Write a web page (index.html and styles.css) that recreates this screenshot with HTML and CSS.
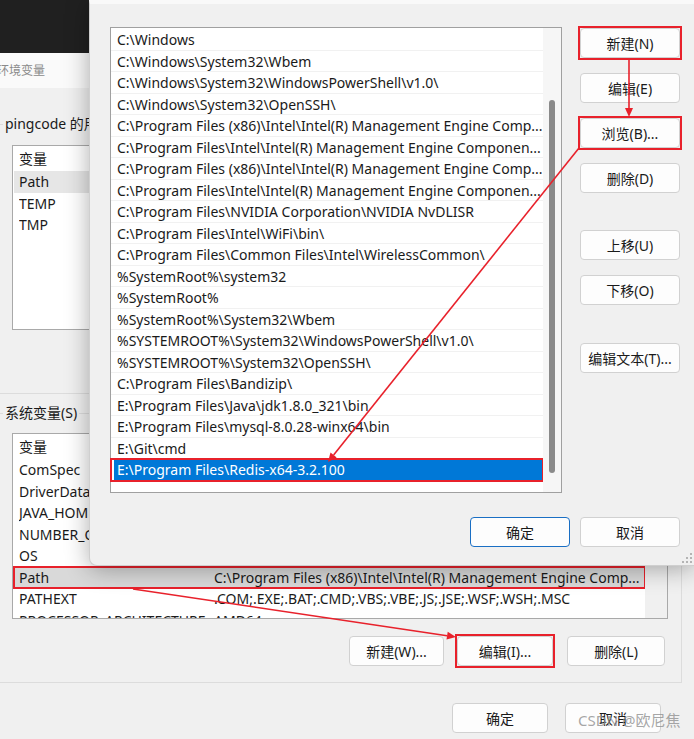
FILE: index.html
```html
<!DOCTYPE html>
<html lang="zh-CN">
<head>
<meta charset="utf-8">
<title>环境变量</title>
<link rel="stylesheet" href="styles.css">
</head>
<body>
<div class="screen">
  <div class="backwin">
    <div class="titlebar">环境变量</div>
    <div class="bw-content">
      <fieldset class="group group-user">
        <legend>pingcode 的用户变量(U)</legend>
        <div class="listview lv-user">
          <div class="lv-body">
            <div class="lv-head"><span class="c1">变量</span><span>值</span></div>
            <div class="lv-row sel-light"><span class="c1">Path</span><span>C:\Users\pingcode\AppData\Local\Microsoft\WindowsApps</span></div>
            <div class="lv-row"><span class="c1">TEMP</span><span>%USERPROFILE%\AppData\Local\Temp</span></div>
            <div class="lv-row"><span class="c1">TMP</span><span>%USERPROFILE%\AppData\Local\Temp</span></div>
          </div>
        </div>
      </fieldset>
      <fieldset class="group group-sys">
        <legend>系统变量(S)</legend>
        <div class="listview lv-sys">
          <div class="lv-body">
            <div class="lv-head"><span class="c1">变量</span><span>值</span></div>
            <div class="lv-row"><span class="c1">ComSpec</span><span>C:\Windows\system32\cmd.exe</span></div>
            <div class="lv-row"><span class="c1">DriverData</span><span>C:\Windows\System32\Drivers\DriverData</span></div>
            <div class="lv-row"><span class="c1">JAVA_HOME</span><span>E:\Program Files\Java\jdk1.8.0_321</span></div>
            <div class="lv-row"><span class="c1">NUMBER_OF_PROCESSORS</span><span>8</span></div>
            <div class="lv-row"><span class="c1">OS</span><span>Windows_NT</span></div>
            <div class="lv-row sel-gray mark-row"><span class="c1">Path</span><span>C:\Program Files (x86)\Intel\Intel(R) Management Engine Comp...</span></div>
            <div class="lv-row"><span class="c1">PATHEXT</span><span>.COM;.EXE;.BAT;.CMD;.VBS;.VBE;.JS;.JSE;.WSF;.WSH;.MSC</span></div>
            <div class="lv-row"><span class="c1">PROCESSOR_ARCHITECTURE</span><span>AMD64</span></div>
          </div>
          <div class="lv-scroll"></div>
        </div>
        <div class="sysbtns">
          <button class="btn b-new">新建(W)...</button>
          <button class="btn b-edit mark">编辑(I)...</button>
          <button class="btn b-del">删除(L)</button>
        </div>
      </fieldset>
      <div class="bw-foot">
        <button class="btn b-foot">确定</button>
        <button class="btn b-foot">取消</button>
      </div>
    </div>
  </div>

  <div class="dialog">
    <div class="dlg-main">
      <div class="pathlist">
        <div class="pl-rows">
          <div class="pl-row">C:\Windows</div>
          <div class="pl-row">C:\Windows\System32\Wbem</div>
          <div class="pl-row">C:\Windows\System32\WindowsPowerShell\v1.0\</div>
          <div class="pl-row">C:\Windows\System32\OpenSSH\</div>
          <div class="pl-row">C:\Program Files (x86)\Intel\Intel(R) Management Engine Comp...</div>
          <div class="pl-row">C:\Program Files\Intel\Intel(R) Management Engine Componen...</div>
          <div class="pl-row">C:\Program Files (x86)\Intel\Intel(R) Management Engine Comp...</div>
          <div class="pl-row">C:\Program Files\Intel\Intel(R) Management Engine Componen...</div>
          <div class="pl-row">C:\Program Files\NVIDIA Corporation\NVIDIA NvDLISR</div>
          <div class="pl-row">C:\Program Files\Intel\WiFi\bin\</div>
          <div class="pl-row">C:\Program Files\Common Files\Intel\WirelessCommon\</div>
          <div class="pl-row">%SystemRoot%\system32</div>
          <div class="pl-row">%SystemRoot%</div>
          <div class="pl-row">%SystemRoot%\System32\Wbem</div>
          <div class="pl-row">%SYSTEMROOT%\System32\WindowsPowerShell\v1.0\</div>
          <div class="pl-row">%SYSTEMROOT%\System32\OpenSSH\</div>
          <div class="pl-row">C:\Program Files\Bandizip\</div>
          <div class="pl-row">E:\Program Files\Java\jdk1.8.0_321\bin</div>
          <div class="pl-row">E:\Program Files\mysql-8.0.28-winx64\bin</div>
          <div class="pl-row">E:\Git\cmd</div>
          <div class="pl-row sel">E:\Program Files\Redis-x64-3.2.100</div>
        </div>
        <div class="pl-scroll"><div class="thumb"></div></div>
      </div>
      <div class="side">
        <button class="btn s-first mark">新建(N)</button>
        <button class="btn s-next">编辑(E)</button>
        <button class="btn s-next mark">浏览(B)...</button>
        <button class="btn s-next">删除(D)</button>
        <button class="btn s-gap1">上移(U)</button>
        <button class="btn s-next">下移(O)</button>
        <button class="btn s-gap2">编辑文本(T)...</button>
      </div>
    </div>
    <div class="dlg-foot">
      <button class="btn d-foot default">确定</button>
      <button class="btn d-foot">取消</button>
    </div>
    <svg class="grip" width="12" height="12" viewBox="0 0 12 12">
      <rect x="9" y="1" width="2" height="2" fill="#b4b4b4"/>
      <rect x="5" y="5" width="2" height="2" fill="#b4b4b4"/>
      <rect x="9" y="5" width="2" height="2" fill="#b4b4b4"/>
      <rect x="1" y="9" width="2" height="2" fill="#b4b4b4"/>
      <rect x="5" y="9" width="2" height="2" fill="#b4b4b4"/>
      <rect x="9" y="9" width="2" height="2" fill="#b4b4b4"/>
    </svg>
  </div>

  <svg class="annot" width="694" height="739" viewBox="0 0 694 739">
    <g stroke="#e8212b" stroke-width="1.6" fill="none">
      <line x1="629" y1="60" x2="629" y2="109"/>
      <line x1="579" y1="148" x2="333.6" y2="455"/>
      <line x1="133" y1="589" x2="447.1" y2="635.7"/>
    </g>
    <g fill="#e8212b">
      <polygon points="629,117 625,108 633,108"/>
      <polygon points="328,462 336.7,457.5 330.5,452.5"/>
      <polygon points="456,637 446.5,639.6 447.7,631.7"/>
    </g>
  </svg>

  <div class="watermark">CSDN @欧尼焦</div>
</div>
</body>
</html>
```
FILE: styles.css
```css
* { box-sizing: border-box; }
html, body { margin: 0; padding: 0; }
body {
  background: #202020;
  font-family: "Noto Sans", "Noto Sans CJK SC", sans-serif;
  font-size: 14px;
  color: #1a1a1a;
}
.screen { position: relative; width: 694px; height: 739px; overflow: hidden; }

/* background window */
.backwin {
  position: absolute; left: -12px; top: 53px;
  width: 720px; height: 700px;
  background: #f0f0f0;
}
.titlebar {
  height: 35px; line-height: 35px;
  background: #fafafa;
  padding-left: 9px;
  font-size: 12px; color: #8a8a8a;
}
.bw-content { padding-left: 2px; }
.group {
  margin: 0 26px 0 0;
  border: 1px solid #dcdcdc;
  min-width: 0;
}
.group-user { margin-top: 26px; padding: 11px 13px 63px 21px; }
.group-sys { margin-top: 9px; padding: 10px 13px 16px 21px; }
.group legend {
  margin-left: -9px;
  padding: 0 2px;
  line-height: 20px;
  font-size: 14px;
}
.listview {
  display: flex;
  background: #fff;
  border: 1px solid #a9a9a9;
  overflow: hidden;
}
.lv-user { height: 185px; }
.lv-sys { height: 186px; }
.lv-body { flex: 1; min-width: 0; overflow: hidden; }
.lv-scroll { width: 22px; flex: none; background: #f0f0f0; }
.lv-head {
  display: flex; height: 25px; line-height: 26px;
  padding-left: 6px; font-size: 14px; white-space: nowrap;
}
.lv-row {
  display: flex; height: 21.5px; line-height: 21.5px;
  margin-left: 1px; padding-left: 5px;
  font-size: 14px; white-space: nowrap;
}
.c1 { width: 195px; flex: none; overflow: hidden; }
.sel-light { background: #e6e6e6; }
.sel-gray { background: #d9d9d9; }
.mark-row { outline: 2px solid #e8212b; outline-offset: -1px; }

.btn {
  position: relative;
  height: 30px; padding: 0;
  border: 1px solid #d1d1d1; border-radius: 4px;
  background: #fdfdfd;
  font-family: inherit; font-size: 14px; color: #1a1a1a;
  display: flex; align-items: center; justify-content: center;
}
.mark::after {
  content: "";
  position: absolute; left: -3px; top: -3px; right: -3px; bottom: -3px;
  border: 2px solid #e8212b;
}

.sysbtns { display: flex; justify-content: flex-end; margin-top: 17px; padding-right: 3px; }
.b-new { width: 95px; }
.b-edit { width: 96px; margin-left: 13px; }
.b-del { width: 98px; margin-left: 14px; }
.bw-foot { display: flex; justify-content: flex-end; gap: 17px; margin-top: 20px; padding-right: 47px; }
.b-foot { width: 96px; }

/* foreground dialog */
.dialog {
  position: absolute; left: 89px; top: 0;
  width: 605px; height: 566px;
  background: #f0f0f0;
  border-top: 4px solid #f9f9f9;
  border-left: 1px solid #cfcfcf;
  border-bottom: 1px solid #cfcfcf;
  border-bottom-left-radius: 8px;
  box-shadow: 0 3px 24px rgba(0, 0, 0, 0.32);
  padding: 23px 14px 0 20px;
}
.dlg-main { display: flex; }
.pathlist {
  display: flex;
  width: 452px; height: 466px;
  background: #fff;
  border: 1px solid #a0a0a0;
}
.pl-rows { flex: 1; min-width: 0; padding-top: 1px; }
.pl-row {
  height: 21.5px; line-height: 21px;
  padding-left: 6px;
  border-bottom: 1px solid #f1f1f1;
  font-size: 14px; white-space: nowrap; overflow: hidden;
}
.pl-row.sel {
  background: #0078d7; color: #fff;
  border-bottom-color: #0078d7;
  box-shadow: inset 3px 0 0 #fff;
  outline: 2px solid #e8212b; outline-offset: -1px;
}
.pl-scroll { width: 18px; flex: none; background: #f6f6f6; padding: 72px 0 0 6px; }
.thumb { width: 6px; height: 373px; background: #8a8a8a; border-radius: 3px; }

.side { margin-left: 18px; width: 100px; display: flex; flex-direction: column; }
.side .btn { width: 100px; }
.s-first { margin-top: 1px; }
.s-next { margin-top: 15px; }
.s-gap1 { margin-top: 37px; }
.s-gap2 { margin-top: 38px; }

.dlg-foot { display: flex; justify-content: flex-end; gap: 10px; margin-top: 24px; }
.d-foot { width: 100px; }
.btn.default { border-color: #1a6fc4; }
.grip { position: absolute; right: 1px; bottom: 1px; }

.annot { position: absolute; left: 0; top: 0; pointer-events: none; }
.watermark {
  position: absolute; left: 578px; top: 708px;
  font-size: 15px; line-height: 24px;
  color: rgba(150, 150, 150, 0.85);
  white-space: nowrap; pointer-events: none;
}
```
